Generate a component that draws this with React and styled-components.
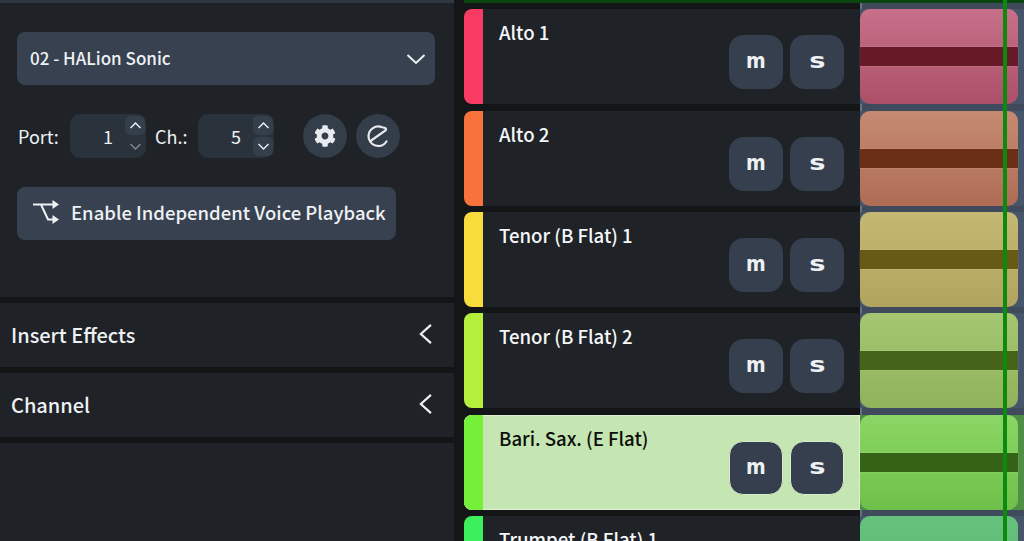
import React from 'react';
import styled, { createGlobalStyle } from 'styled-components';
import { FaCog } from 'react-icons/fa';

const GlobalStyle = createGlobalStyle`
  html, body {
    margin: 0;
    padding: 0;
    width: 1024px;
    height: 541px;
    overflow: hidden;
    background: #131516;
    font-family: "Noto Sans CJK JP", "Noto Sans", sans-serif;
  }
  * {
    box-sizing: border-box;
  }
`;

const Page = styled.div`
  position: relative;
  display: grid;
  grid-template-columns: 454px 570px;
  width: 1024px;
  height: 541px;
  overflow: hidden;
  background: #131516;
`;

const Sidebar = styled.aside`
  display: flex;
  flex-direction: column;
  gap: 6px;
  height: 541px;
  overflow: hidden;
`;

const TopStrip = styled.div`
  height: 3px;
  margin-bottom: -6px;
  background: #2f3742;
`;

const RoutingPanel = styled.section`
  display: flex;
  flex-direction: column;
  height: 294px;
  padding: 29px 19px 0 17px;
  background: #1f2327;
`;

const DeviceSelect = styled.div`
  display: flex;
  align-items: center;
  justify-content: space-between;
  height: 53px;
  padding: 0 9px 3px 13px;
  border-radius: 8px;
  background: #374150;
  color: #eef1f4;
  font-size: 17px;
  font-weight: 500;
`;

const PortRow = styled.div`
  display: flex;
  align-items: center;
  height: 44px;
  margin-top: 29px;
  color: #eef1f4;
  font-size: 18px;
`;

const PortLabel = styled.span`
  width: ${({ $width }) => $width}px;
  padding-left: ${({ $inset }) => $inset || 0}px;
  padding-bottom: 1px;
`;

const Spinner = styled.div`
  display: flex;
  align-items: center;
  justify-content: space-between;
  width: 76px;
  height: 44px;
  padding: 2px 1px 2px 0;
  border-radius: 10px;
  background: #2a323c;
`;

const SpinnerValue = styled.span`
  flex: 1;
  padding-right: 12px;
  padding-bottom: 1px;
  text-align: right;
  font-size: 18px;
`;

const StepperColumn = styled.div`
  display: flex;
  flex-direction: column;
  justify-content: space-between;
  width: 20px;
  height: 40px;
`;

const StepButton = styled.div`
  display: flex;
  align-items: center;
  justify-content: center;
  height: 19px;
  border-radius: 5px;
  background: ${({ $active }) => ($active ? '#353e4b' : 'transparent')};
  color: ${({ $disabled }) => ($disabled ? '#7d858e' : '#e8ebee')};
`;

const RoundButton = styled.div`
  display: flex;
  align-items: center;
  justify-content: center;
  width: 44px;
  height: 44px;
  margin-left: ${({ $gap }) => $gap}px;
  border-radius: 50%;
  background: #343d4a;
  color: #e8ebee;
`;

const VoiceButton = styled.div`
  display: flex;
  align-items: center;
  gap: 11px;
  width: 379px;
  height: 53px;
  margin-top: 29px;
  padding: 0 0 3px 15px;
  border-radius: 8px;
  background: #374150;
  color: #eef1f4;
  font-size: 18.5px;
  font-weight: 500;
  white-space: nowrap;
`;

const SectionRow = styled.div`
  display: flex;
  align-items: center;
  justify-content: space-between;
  height: 64px;
  padding: 0 17px 2px 11px;
  background: #1f2327;
  color: #eef1f4;
  font-size: 20px;
  font-weight: 500;
`;

const SidebarRest = styled.div`
  flex: 1;
  background: #1f2327;
`;

const Tracks = styled.main`
  display: flex;
  flex-direction: column;
  gap: 6.3px;
  padding-left: 10px;
  background:
    linear-gradient(#66727e, #66727e) no-repeat 406px 0 / 2px 100%,
    linear-gradient(#3f4b5c, #3f4b5c) no-repeat right top / 164px 100%;
`;

const TimelineBar = styled.div`
  flex: none;
  height: 3px;
  margin-left: -10px;
  margin-bottom: 0.1px;
  background: linear-gradient(90deg, #131516 10px, #0a4510 10px);
`;

const TrackRow = styled.div`
  display: grid;
  flex: none;
  grid-template-columns: 396px 164px;
  height: 95px;
`;

const TrackHeader = styled.div`
  display: grid;
  grid-template-columns: 19px 1fr;
  background: ${({ $selected }) => ($selected ? '#c5e5b2' : '#1f2327')};
  box-shadow: ${({ $selected }) => ($selected ? 'inset 0 0 0 1px #dff0d2' : 'none')};
  border-radius: 8px 0 0 8px;
  color: ${({ $selected }) => ($selected ? '#0c0e0c' : '#f4f6f8')};
`;

const ColorTab = styled.div`
  border-radius: 8px 0 0 8px;
  background: ${({ $color }) => $color};
`;

const TrackBody = styled.div`
  position: relative;
  padding: 11px 16px 0 16px;
`;

const TrackName = styled.div`
  font-size: 18.6px;
  font-weight: 500;
  line-height: 24px;
  white-space: nowrap;
`;

const TrackButtons = styled.div`
  position: absolute;
  top: 26px;
  right: 16px;
  display: flex;
  gap: 7px;
`;

const TrackButton = styled.div`
  display: flex;
  align-items: center;
  justify-content: center;
  width: 54px;
  height: 54px;
  border: 1px solid ${({ $selected }) => ($selected ? '#d9ebcc' : '#353f4d')};
  border-radius: 14px;
  background: #353f4d;
  color: #eef1f4;
`;

const ButtonGlyph = styled.span`
  display: block;
  margin-top: -1px;
  font-family: "DejaVu Sans", sans-serif;
  font-size: 21px;
  font-weight: 700;
  line-height: 1;
  transform: scale(${({ $stretchX }) => $stretchX}, 1.05);
`;

const Lane = styled.div`
  padding-right: 6px;
  background: ${({ $selected }) => ($selected ? '#4f8f45' : '#46556a')};
`;

const Clip = styled.div`
  height: 100%;
  padding-top: 38px;
  border-radius: 10px;
  background: linear-gradient(${({ $from }) => $from}, ${({ $to }) => $to});
`;

const ClipBand = styled.div`
  height: 19px;
  background: ${({ $color }) => $color};
  box-shadow: 0 0 0 1px rgba(255, 255, 255, 0.08);
`;

const Playhead = styled.div`
  position: absolute;
  top: 0;
  bottom: 0;
  left: 1003px;
  width: 4px;
  background: #0b8a0b;
`;

const Chevron = ({ dir, size = 12, weight = 1.2 }) => {
  const points = {
    up: '2,8 6,4 10,8',
    down: '2,4 6,8 10,4',
    left: '8.7,1 3.2,6 8.7,11',
  };
  return (
    <svg width={size} height={size} viewBox="0 0 12 12" fill="none">
      <polyline points={points[dir]} stroke="currentColor" strokeWidth={weight} />
    </svg>
  );
};

const SelectArrow = () => (
  <svg width="20" height="12" viewBox="0 0 20 12" fill="none" style={{ marginTop: 3 }}>
    <polyline points="1.5,2 10,10 18.5,2" stroke="#eef1f4" strokeWidth="1.9" />
  </svg>
);

const EditIcon = () => (
  <svg width="26" height="26" viewBox="0 0 26 26" fill="none" stroke="currentColor" strokeWidth="2.2" strokeLinecap="round">
    <path d="M21.5 18.5 A9.8 9.8 0 0 1 3.5 13 A9.8 9.8 0 0 1 17 4.2" />
    <path d="M5.5 18 L20.5 7.5 C22 6 20.5 4.8 18.5 4.6" />
  </svg>
);

const RouteIcon = () => (
  <svg width="28" height="26" viewBox="0 0 28 26" fill="none">
    <path d="M1 5.5 H22 M9 5.5 L16 20.5 H22" stroke="#eef1f4" strokeWidth="2" />
    <path d="M20.5 1 L27 5.5 L20.5 10 Z M20.5 16 L27 20.5 L20.5 25 Z" fill="#eef1f4" />
  </svg>
);

const tracks = [
  { name: 'Alto 1', color: '#f73b63', from: '#c8708a', to: '#ab5068', band: '#661a27' },
  { name: 'Alto 2', color: '#f7733b', from: '#c58a72', to: '#b06c55', band: '#6b2e17' },
  { name: 'Tenor (B Flat) 1', color: '#f7dc3b', from: '#c4b873', to: '#b0a45e', band: '#665a16' },
  { name: 'Tenor (B Flat) 2', color: '#b4f03b', from: '#a5c772', to: '#8fb25a', band: '#46631a' },
  { name: 'Bari. Sax. (E Flat)', color: '#74f03b', from: '#8ad664', to: '#6fc04a', band: '#346315', selected: true },
  { name: 'Trumpet (B Flat) 1', color: '#3bf05a', from: '#66c27c', to: '#55b06c', band: '#1f6330' },
];

const App = () => {
  return (
    <>
      <GlobalStyle />
      <Page>
        <Sidebar>
          <TopStrip />
          <RoutingPanel>
            <DeviceSelect>
              02 - HALion Sonic
              <SelectArrow />
            </DeviceSelect>
            <PortRow>
              <PortLabel $width={53} $inset={1}>Port:</PortLabel>
              <Spinner>
                <SpinnerValue>1</SpinnerValue>
                <StepperColumn>
                  <StepButton $active><Chevron dir="up" size={15} /></StepButton>
                  <StepButton $disabled><Chevron dir="down" size={15} /></StepButton>
                </StepperColumn>
              </Spinner>
              <PortLabel $width={52} $inset={9}>Ch.:</PortLabel>
              <Spinner>
                <SpinnerValue>5</SpinnerValue>
                <StepperColumn>
                  <StepButton $active><Chevron dir="up" size={15} /></StepButton>
                  <StepButton $active><Chevron dir="down" size={15} /></StepButton>
                </StepperColumn>
              </Spinner>
              <RoundButton $gap={29}><FaCog size={22} /></RoundButton>
              <RoundButton $gap={9}><EditIcon /></RoundButton>
            </PortRow>
            <VoiceButton>
              <RouteIcon />
              Enable Independent Voice Playback
            </VoiceButton>
          </RoutingPanel>
          <SectionRow>
            Insert Effects
            <Chevron dir="left" size={22} weight={1.2} />
          </SectionRow>
          <SectionRow>
            Channel
            <Chevron dir="left" size={22} weight={1.2} />
          </SectionRow>
          <SidebarRest />
        </Sidebar>
        <Tracks>
          <TimelineBar />
          {tracks.map((track) => (
            <TrackRow key={track.name}>
              <TrackHeader $selected={track.selected}>
                <ColorTab $color={track.color} />
                <TrackBody>
                  <TrackName>{track.name}</TrackName>
                  <TrackButtons>
                    <TrackButton $selected={track.selected}><ButtonGlyph $stretchX={0.9}>m</ButtonGlyph></TrackButton>
                    <TrackButton $selected={track.selected}><ButtonGlyph $stretchX={1.3}>s</ButtonGlyph></TrackButton>
                  </TrackButtons>
                </TrackBody>
              </TrackHeader>
              <Lane $selected={track.selected}>
                <Clip $from={track.from} $to={track.to}>
                  <ClipBand $color={track.band} />
                </Clip>
              </Lane>
            </TrackRow>
          ))}
        </Tracks>
        <Playhead />
      </Page>
    </>
  );
};

export default App;
